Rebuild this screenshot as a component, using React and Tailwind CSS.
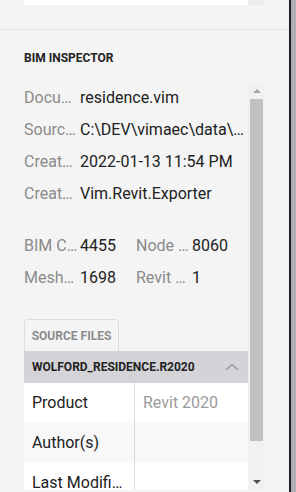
export default function App() {
  const info = [
    ['Document', 'residence.vim'],
    ['Source Path', 'C:\\DEV\\vimaec\\data\\models\\residence.rvt'],
    ['Created On', '2022-01-13 11:54 PM'],
    ['Created By', 'Vim.Revit.Exporter'],
  ];
  const stats = [
    ['BIM Count', '4455', 'Node Count', '8060'],
    ['Mesh Count', '1698', 'Revit Files', '1'],
  ];
  const rows = [
    ['Product', 'Revit 2020'],
    ['Author(s)', ''],
    ['Last Modified', ''],
  ];

  return (
    <div className="w-[296px] h-[492px] bg-[#f4f4f4] flex overflow-hidden" style={{ fontFamily: 'Roboto, "Liberation Sans", sans-serif' }}>
      <div className="w-[289px] flex flex-col">
        {/* previous panel tail */}
        <div className="h-[30px] border-b border-[#e2e2e2] flex items-start pl-6">
          <div className="w-[224px] h-[5px] bg-white" />
          <div className="w-[16px] h-[5px] bg-[#ededed]" />
        </div>

        <div className="pl-6 pt-[21px] h-[52px]">
          <h2 className="text-[12px] font-bold uppercase text-[#222] leading-[14px]">BIM Inspector</h2>
        </div>

        <div className="flex pl-6 h-[408px]">
          <div className="w-[224px] overflow-hidden">
            <div className="flex flex-col">
              {info.map(([k, v]) => (
                <div key={k} className="flex items-center h-[32px] text-[16px]">
                  <span className="w-[52px] truncate text-[#8a8a8a]">{k}</span>
                  <span className="ml-1 w-[164px] truncate text-[#222]">{v}</span>
                </div>
              ))}
            </div>

            <div className="mt-[20px] flex flex-col">
              {stats.map(([a, av, b, bv]) => (
                <div key={a} className="flex items-center h-[32px] text-[16px]">
                  <div className="w-[112px] flex">
                    <span className="w-[54px] truncate text-[#8a8a8a]">{a}</span>
                    <span className="ml-[2px] text-[#222]">{av}</span>
                  </div>
                  <div className="flex">
                    <span className="w-[54px] truncate text-[#8a8a8a]">{b}</span>
                    <span className="ml-[2px] text-[#222]">{bv}</span>
                  </div>
                </div>
              ))}
            </div>

            <div className="mt-[25px]">
              <div className="w-[95px] h-[32px] border border-b-0 border-[#dcdcdc] rounded-t flex items-center justify-center">
                <span className="text-[12px] font-bold uppercase text-[#8c8c8c]">Source Files</span>
              </div>
              <div className="h-[32px] bg-[#d4d4d8] flex items-center justify-between pl-2 pr-[9px]">
                <span className="text-[12px] font-bold text-[#222]">WOLFORD_RESIDENCE.R2020</span>
                <svg width="14" height="8" viewBox="0 0 14 8" fill="none" stroke="#9a9a9e" strokeWidth="1.6">
                  <path d="M1 7 L7 1.5 L13 7" />
                </svg>
              </div>
              <div className="flex flex-col">
                {rows.map(([k, v], i) => (
                  <div key={k} className={`flex h-[40px] ${i % 2 === 1 ? 'bg-[#f8f8f8]' : 'bg-white'}`}>
                    <div className="w-[111px] pl-2 pr-[5px] flex items-center border-r border-[#dadada]">
                      <span className="truncate text-[16px] text-[#222]">{k}</span>
                    </div>
                    <div className="flex-1 pl-2 flex items-center">
                      <span className="text-[16px] text-[#9a9a9a]">{v}</span>
                    </div>
                  </div>
                ))}
              </div>
            </div>
          </div>

          {/* scrollbar */}
          <div className="w-[17px] bg-[#f1f1f1] flex flex-col items-center">
            <div className="h-[17px] flex items-center justify-center">
              <div className="w-0 h-0 border-l-[4px] border-r-[4px] border-b-[4px] border-l-transparent border-r-transparent border-b-[#a3a3a3]" />
            </div>
            <div className="w-[13px] h-[342px] bg-[#c1c1c1]" />
            <div className="flex-1" />
            <div className="h-[17px] flex items-center justify-center">
              <div className="w-0 h-0 border-l-[4px] border-r-[4px] border-t-[4px] border-l-transparent border-r-transparent border-t-[#505050]" />
            </div>
          </div>
        </div>
      </div>
      <div className="w-[2px] bg-[#1e1e1e]" />
      <div className="flex-1 bg-[#aeaeb4]" />
    </div>
  );
}
